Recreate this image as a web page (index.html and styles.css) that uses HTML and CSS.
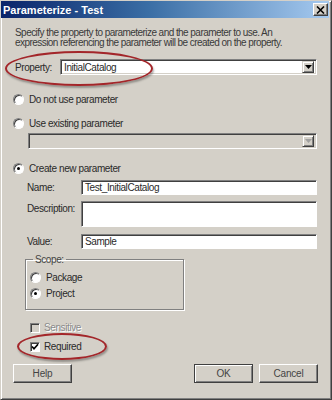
FILE: index.html
```html
<!DOCTYPE html>
<html lang="en">

<head>
    <meta charset="UTF-8">
    <title>Parameterize - Test</title>
    <link rel="stylesheet" href="styles.css">
</head>

<body>

    <div class="window">
        <div class="titlebar">
            <span class="title">Parameterize - Test</span>
            <span class="close">
                <svg width="9" height="8" viewBox="0 0 9 8"><path d="M1 0.5 L8 7.5 M8 0.5 L1 7.5" stroke="#000" stroke-width="1.6"/></svg>
            </span>
        </div>

        <div class="content">
            <p class="intro">Specify the property to parameterize and the parameter to use. An<br>expression referencing the parameter will be created on the property.</p>

            <div class="prop-row">
                <span class="prop-label">Property:</span>
                <div class="combo">
                    <span class="combo-text">InitialCatalog</span>
                    <span class="drop"><svg width="7" height="4" viewBox="0 0 7 4"><path d="M0 0 H7 L3.5 4 Z" fill="#000"/></svg></span>
                </div>
                <div class="mark mark-prop"></div>
            </div>

            <div class="option opt-first"><span class="radio"></span>Do not use parameter</div>
            <div class="option opt-existing"><span class="radio"></span>Use existing parameter</div>
            <div class="combo combo-disabled">
                <span class="combo-text"></span>
                <span class="drop"><svg width="7" height="4" viewBox="0 0 7 4"><path d="M0 0 H7 L3.5 4 Z" fill="#a0a0a0"/></svg></span>
            </div>
            <div class="option opt-create"><span class="radio checked"></span>Create new parameter</div>

            <div class="fields">
                <span class="field-label">Name:</span>
                <div class="textbox">Test_InitialCatalog</div>
                <span class="field-label">Description:</span>
                <div class="textbox textarea"></div>
                <span class="field-label">Value:</span>
                <div class="textbox">Sample</div>
            </div>

            <fieldset class="scope">
                <legend>Scope:</legend>
                <div class="option"><span class="radio"></span>Package</div>
                <div class="option opt-project"><span class="radio checked"></span>Project</div>
            </fieldset>

            <div class="check disabled"><span class="box"></span>Sensitive</div>
            <div class="check required">
                <span class="box"><svg width="8" height="8" viewBox="0 0 8 8"><path d="M1 3.5 L3 5.8 L7 1.2" fill="none" stroke="#000" stroke-width="1.7"/></svg></span>Required
                <div class="mark mark-req"></div>
            </div>

            <div class="buttons">
                <button>Help</button>
                <div class="button-group">
                    <button class="default">OK</button>
                    <button>Cancel</button>
                </div>
            </div>
        </div>
    </div>

</body>

</html>
```

FILE: styles.css
```css
body {
    margin: 0;
    background-color: #d4d0c8;
    font-family: 'Liberation Sans', Arial, sans-serif;
    font-size: 10px;
    letter-spacing: -0.4px;
    color: #2a2a2a;
}

.window {
    width: 332px;
    height: 400px;
    box-sizing: border-box;
    border: 1px solid;
    border-color: #d4d0c8 #404040 #404040 #d4d0c8;
    box-shadow: inset 1px 1px #fff, inset -1px -1px #808080;
    background-color: #d4d0c8;
}

.titlebar {
    height: 17px;
    margin-right: 2px;
    display: flex;
    align-items: center;
    justify-content: space-between;
    background: linear-gradient(to right, #0a246a, #3a6ea5 45%, #a6caf0);
}

.title {
    color: #fff;
    font-weight: bold;
    font-size: 11px;
    letter-spacing: 0;
    padding-left: 2px;
}

.close {
    width: 15px;
    height: 13px;
    margin-right: 1px;
    box-sizing: border-box;
    background-color: #d4d0c8;
    border: 1px solid;
    border-color: #fff #404040 #404040 #fff;
    box-shadow: inset -1px -1px #808080;
    display: flex;
    align-items: center;
    justify-content: center;
}

.content {
    padding: 0 14px;
}

.intro {
    margin: 10px 0 0 0;
    line-height: 10px;
    letter-spacing: -0.55px;
    white-space: nowrap;
    color: #3a3a3a;
}

/* property row */
.prop-row {
    position: relative;
    display: flex;
    align-items: center;
    margin-top: 11px;
}

.prop-label {
    width: 45px;
}

.combo {
    flex: 1;
    height: 16px;
    box-sizing: border-box;
    background-color: #fff;
    border: 1px solid;
    border-color: #808080 #fff #fff #808080;
    box-shadow: inset 1px 1px #404040, inset -1px -1px #d4d0c8;
    display: flex;
    align-items: center;
    justify-content: space-between;
    padding: 2px;
}

.combo-text {
    padding-left: 1px;
}

.drop {
    width: 12px;
    height: 12px;
    box-sizing: border-box;
    background-color: #d4d0c8;
    border: 1px solid;
    border-color: #d4d0c8 #404040 #404040 #d4d0c8;
    box-shadow: inset 1px 1px #fff, inset -1px -1px #808080;
    display: flex;
    align-items: center;
    justify-content: center;
}

.combo-disabled {
    flex: none;
    margin: 4px 0 0 13px;
    background-color: #d4d0c8;
}

/* red marker ellipses drawn over the screenshot */
.mark {
    position: absolute;
    border: 2px solid #a3262a;
    border-radius: 50%;
    box-shadow: 1px 2px 2px rgba(0, 0, 0, 0.3);
    pointer-events: none;
}

.mark-prop {
    left: -10px;
    top: -8px;
    width: 144px;
    height: 31px;
}

.mark-req {
    left: -13px;
    top: -8px;
    width: 86px;
    height: 23px;
}

/* radio buttons */
.option {
    display: flex;
    align-items: center;
    height: 12px;
    margin-left: -2px;
}

.opt-first {
    margin-top: 18px;
}

.opt-existing {
    margin-top: 12px;
}

.opt-create {
    margin-top: 13px;
}

.radio {
    width: 11px;
    height: 11px;
    box-sizing: border-box;
    border-radius: 50%;
    background-color: #fff;
    border: 1px solid;
    border-color: #808080 #fff #fff #808080;
    box-shadow: inset 1px 1px #404040;
    margin-right: 5px;
    display: flex;
    align-items: center;
    justify-content: center;
}

.radio.checked::after {
    content: '';
    width: 3px;
    height: 3px;
    border-radius: 50%;
    background-color: #000;
}

/* name / description / value */
.fields {
    display: grid;
    grid-template-columns: 54px 1fr;
    row-gap: 6px;
    margin: 6px 0 0 12px;
    align-items: center;
}

.field-label {
    align-self: start;
    line-height: 15px;
}

.textbox {
    height: 15px;
    box-sizing: border-box;
    background-color: #fff;
    border: 1px solid;
    border-color: #808080 #fff #fff #808080;
    box-shadow: inset 1px 1px #404040;
    padding: 1px 3px;
    line-height: 12px;
}

.textarea {
    height: 26px;
    margin-bottom: 1px;
}

/* scope group */
.scope {
    width: 159px;
    box-sizing: border-box;
    margin: 5px 0 0 10px;
    padding: 6px 0 10px 4px;
    border: 1px solid #808080;
    box-shadow: inset 1px 1px #fff, 1px 1px #fff;
}

.scope legend {
    padding: 0 2px;
    margin-left: 3px;
    color: #444;
}

.scope .option {
    margin-left: 0;
}

.opt-project {
    margin-top: 4px;
}

/* check boxes */
.check {
    position: relative;
    display: flex;
    align-items: center;
    height: 11px;
    margin-left: 15px;
}

.check.disabled {
    margin-top: 12px;
    color: #8a8a8a;
    text-shadow: 1px 1px #fff;
}

.check.required {
    margin-top: 8px;
}

.box {
    width: 10px;
    height: 10px;
    box-sizing: border-box;
    background-color: #fff;
    border: 1px solid;
    border-color: #808080 #fff #fff #808080;
    box-shadow: inset 1px 1px #404040;
    margin-right: 4px;
    display: flex;
    align-items: center;
    justify-content: center;
}

.check.disabled .box {
    background-color: #d4d0c8;
}

/* bottom buttons */
.buttons {
    display: flex;
    justify-content: space-between;
    margin: 12px -1px 0 -2px;
}

.button-group {
    display: flex;
    gap: 6px;
}

button {
    width: 59px;
    height: 19px;
    box-sizing: border-box;
    font-family: inherit;
    font-size: 10px;
    letter-spacing: -0.2px;
    color: #444;
    background-color: #d4d0c8;
    border: 1px solid;
    border-color: #fff #404040 #404040 #fff;
    box-shadow: inset -1px -1px #808080;
    padding: 0;
}

button.default {
    border-color: #404040;
    box-shadow: inset 1px 1px #fff, inset -1px -1px #808080;
}
```
